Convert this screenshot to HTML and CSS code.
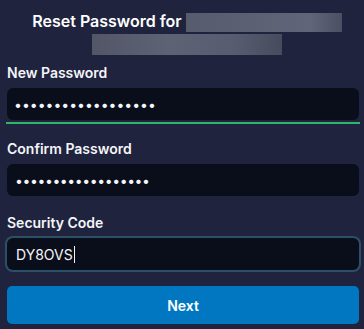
FILE: index.html
```html
<!DOCTYPE html>
<html>
<head>
<meta charset="utf-8">
<link rel="stylesheet" href="styles.css">
</head>
<body>
<div class="page">
  <h1 class="title">Reset Password for <span class="redact redact-a"></span> <span class="redact redact-b"></span></h1>
  <div class="field field-first">
    <div class="label">New Password</div>
    <div class="input dots">••••••••••••••••••</div>
    <div class="strength"></div>
  </div>
  <div class="field">
    <div class="label">Confirm Password</div>
    <div class="input dots dots-b">••••••••••••••••••</div>
  </div>
  <div class="field field-last">
    <div class="label">Security Code</div>
    <div class="input focused">DY8OVS<span class="caret"></span></div>
  </div>
  <div class="button">Next</div>
</div>
</body>
</html>
```
FILE: styles.css
```css
html, body {
  margin: 0;
  padding: 0;
  background: #1f233e;
}
body {
  font-family: Inter, "Noto Sans", "Liberation Sans", sans-serif;
  color: #f4f5f8;
}
.page {
  padding: 10px 5px 0 7px;
  display: flex;
  flex-direction: column;
}
.title {
  margin: 0 0 8px 0;
  padding-left: 8px;
  text-align: center;
  font-size: 16px;
  line-height: 22px;
  font-weight: 600;
  color: #ffffff;
}
.redact {
  display: inline-block;
}
.redact-a {
  width: 156px;
  height: 19px;
  vertical-align: -5px;
  background: linear-gradient(90deg, #565b6d 0%, #5b6072 40%, #60657a 80%, #4b4f62 100%);
}
.redact-b {
  width: 190px;
  height: 21px;
  vertical-align: -6px;
  background: linear-gradient(90deg, #525667 0%, #5d6275 40%, #585c70 75%, #474b5d 100%);
}
.field {
  display: flex;
  flex-direction: column;
  margin-bottom: 17px;
}
.field-first {
  margin-bottom: 15px;
}
.field-last {
  margin-bottom: 16px;
}
.label {
  font-size: 14px;
  line-height: 20px;
  font-weight: 600;
  margin-bottom: 5px;
  color: #f4f5f8;
}
.input {
  height: 32px;
  box-sizing: border-box;
  padding: 0 9px;
  border-radius: 6px;
  background: #0a0d1a;
  display: flex;
  align-items: center;
  font-size: 14px;
  color: #f4f5f8;
}
.dots {
  font-size: 14px;
  letter-spacing: 0;
  padding-left: 7px;
}
.dots-b {
  letter-spacing: -0.4px;
  padding-left: 8px;
}
.strength {
  height: 2px;
  margin: 2px -1px 0 -1px;
  background: #30b56c;
}
.focused {
  box-shadow: 0 0 0 2px #2c5067;
}
.caret {
  display: inline-block;
  width: 1px;
  height: 17px;
  margin-left: 1px;
  background: #f4f5f8;
}
.button {
  height: 38px;
  border-radius: 5px;
  background: #0077c0;
  color: #ffffff;
  font-size: 14px;
  font-weight: 600;
  display: flex;
  align-items: center;
  justify-content: center;
}
```
